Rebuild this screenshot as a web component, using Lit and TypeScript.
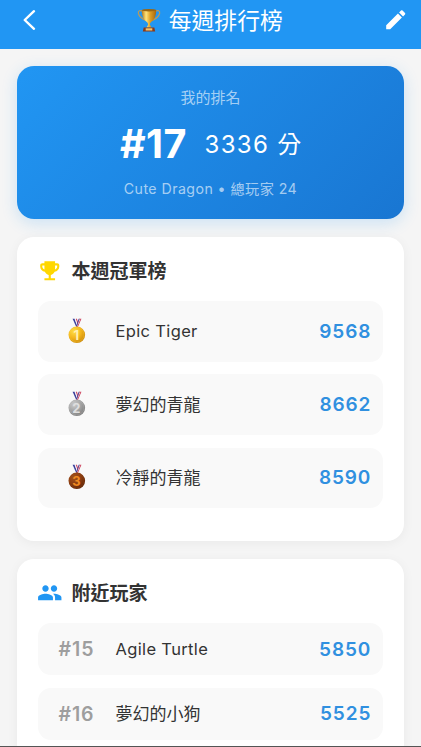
import { LitElement, html, css, svg } from "lit";
import { customElement, property } from "lit/decorators.js";

const TROPHY =
  "M19 5h-2V3H7v2H5c-1.1 0-2 .9-2 2v1c0 2.55 1.92 4.63 4.39 4.94.63 1.5 1.98 2.63 3.61 2.96V19H7v2h10v-2h-4v-3.1c1.63-.33 2.98-1.46 3.61-2.96C19.08 12.63 21 10.55 21 8V7c0-1.1-.9-2-2-2zM5 8V7h2v3.82C5.84 10.4 5 9.3 5 8zm14 0c0 1.3-.84 2.4-2 2.82V7h2v1z";
const PEOPLE =
  "M16 11c1.66 0 2.99-1.34 2.99-3S17.66 5 16 5c-1.66 0-3 1.34-3 3s1.34 3 3 3zm-8 0c1.66 0 2.99-1.34 2.99-3S9.66 5 8 5C6.34 5 5 6.34 5 8s1.34 3 3 3zm0 2c-2.33 0-7 1.17-7 3.5V19h14v-2.5c0-2.33-4.67-3.5-7-3.5zm8 0c-.29 0-.62.02-.97.05 1.16.84 1.97 1.97 1.97 3.45V19h6v-2.5c0-2.33-4.67-3.5-7-3.5z";
const PENCIL =
  "M3 17.25V21h3.75L17.81 9.94l-3.75-3.75L3 17.25zM20.71 7.04c.39-.39.39-1.02 0-1.41l-2.34-2.34c-.39-.39-1.02-.39-1.41 0l-1.83 1.83 3.75 3.75 1.83-1.83z";

const MEDALS = [
  { light: "#ffe04a", mid: "#f3b51c", dark: "#c58208", ink: "#fff0b0" },
  { light: "#cccccc", mid: "#a3a3a3", dark: "#757575", ink: "#dedede" },
  { light: "#a5521c", mid: "#8c3d10", dark: "#572005", ink: "#f08a22" },
];

@customElement("rank-medal")
class RankMedal extends LitElement {
  @property({ type: Number }) place = 1;
  static styles = css`
    :host { display: block; width: 20px; height: 27px; }
    svg { display: block; }
    text { font: 700 13px Inter, sans-serif; }
  `;
  render() {
    const m = MEDALS[this.place - 1];
    return html`<svg width="20" height="27" viewBox="0 0 20 27">
      <defs>
        <radialGradient id="g" cx=".35" cy=".3" r=".8">
          <stop offset="0" stop-color=${m.light} />
          <stop offset=".5" stop-color=${m.mid} />
          <stop offset="1" stop-color=${m.dark} />
        </radialGradient>
      </defs>
      <path d="M5.6 .8h2l3 8h-1.4z" fill="#3a3f9a" />
      <path d="M7.6 .8h1.3l2.1 6-.6 1.6z" fill="#f3eef4" />
      <path d="M8.9 .8h1l1.5 4.5-.5 1.5z" fill="#c9304c" />
      <path d="M12.2 .8h2.2l-3.4 8H9.6z" fill="#c9304c" />
      <path d="M12.7 .8h.8l-3 7.4-.4-.5z" fill="#f3eef4" />
      <path d="M11.7 .8h.8L10 8l-.4-1z" fill="#3a3f9a" />
      <circle cx="9.8" cy="16.8" r="8.3" fill="url(#g)" />
      <circle cx="9.8" cy="16.8" r="7.2" fill="none" stroke=${m.light} stroke-opacity=".35" stroke-width=".7" />
      <text x="9.8" y="21.6" text-anchor="middle" fill=${m.ink}>${this.place}</text>
    </svg>`;
  }
}

@customElement("player-row")
class PlayerRow extends LitElement {
  @property({ type: Number }) rank = 1;
  @property() name = "";
  @property({ type: Number }) score = 0;
  static styles = css`
    :host {
      display: flex;
      align-items: center;
      box-sizing: border-box;
      height: 52px;
      padding: 0 12px 0 13px;
      border-radius: 13px;
      background: #f9f9f9;
    }
    :host([podium]) { height: 60.5px; }
    .rank {
      width: 51px;
      margin-right: 13.5px;
      display: flex;
      justify-content: center;
      font-weight: 600;
      font-size: 19.5px;
      letter-spacing: 0.9px;
      color: #9e9e9e;
    }
    .name { flex: 1; font-size: 16.5px; letter-spacing: 0.35px; color: #333; }
    .name.cjk { font-size: 17px; letter-spacing: 0; padding-bottom: 2px; }
    .score { font-size: 19px; font-weight: 600; letter-spacing: 0.9px; margin-right: -0.3px; color: #3090e0; }
  `;
  render() {
    const cjk = this.name.charCodeAt(0) > 255;
    return html`
      <div class="rank">
        ${this.rank <= 3 ? html`<rank-medal .place=${this.rank}></rank-medal>` : `#${this.rank}`}
      </div>
      <div class="name ${cjk ? "cjk" : ""}">${this.name}</div>
      <div class="score">${this.score}</div>
    `;
  }
}

const icon = (d: string, cls: string) =>
  html`<svg class=${cls} viewBox="0 0 24 24">${svg`<path d=${d} fill="currentColor" />`}</svg>`;

@customElement("app-root")
class AppRoot extends LitElement {
  static styles = css`
    :host {
      display: flex;
      flex-direction: column;
      position: relative;
      box-sizing: border-box;
      height: 747px;
      overflow: hidden;
      background: #f5f5f5;
      color: #333;
      font-family: Inter, "Noto Sans CJK TC", sans-serif;
    }
    :host::after {
      content: "";
      position: absolute;
      inset: auto 0 0;
      height: 1px;
      background: #555;
    }
    header {
      flex: none;
      display: grid;
      grid-template-columns: 60px 1fr 60px;
      align-items: center;
      box-sizing: border-box;
      height: 49.3px;
      padding-bottom: 9px;
      background: #2196f3;
      color: #fff;
    }
    .back { width: 14px; height: 22px; margin-left: 22px; }
    .title { display: flex; align-items: center; justify-content: center; gap: 7.5px; margin-left: -1px; }
    .title h1 { margin: 0; padding-top: 1px; font-size: 22.8px; line-height: 30px; font-weight: 400; }
    .cup { width: 24px; height: 25px; }
    .edit { width: 25.5px; height: 25.5px; margin-left: 21.5px; }
    main { display: flex; flex-direction: column; gap: 17.5px; padding: 16.7px 17px 0; }
    .mine {
      flex: none;
      display: flex;
      flex-direction: column;
      align-items: center;
      box-sizing: border-box;
      height: 153.5px;
      padding-top: 21px;
      border-radius: 17px;
      background: linear-gradient(135deg, #2196f3, #1976d2);
      box-shadow: 0 4px 16px rgba(33, 150, 243, 0.2);
    }
    .label { font-size: 15px; line-height: 22px; color: rgba(255, 255, 255, 0.62); }
    .line { display: flex; align-items: center; gap: 17.5px; height: 50px; margin-top: 10px; color: #fff; }
    .place { font-size: 39.5px; font-weight: 700; letter-spacing: 0.5px; }
    .points { margin-top: -3px; font-size: 24px; letter-spacing: 1.3px; }
    .points span { letter-spacing: 0; }
    .meta { margin-top: 9px; font-size: 14.2px; line-height: 22px; letter-spacing: 0.43px; color: rgba(255, 255, 255, 0.62); }
    .card {
      flex: none;
      box-sizing: border-box;
      padding: 21px;
      border-radius: 17px;
      background: #fff;
      box-shadow: 0 2px 12px rgba(0, 0, 0, 0.05);
    }
    .podium { height: 304.5px; }
    .head { display: flex; align-items: center; gap: 8.7px; height: 26px; margin: 0 0 17.2px -0.7px; }
    .head h2 { margin: 0; padding-top: 2px; font-size: 19px; line-height: 26px; font-weight: 700; color: #333; }
    .ico { width: 25.5px; height: 25.5px; }
    .gold { color: #ffd700; }
    .blue { color: #2196f3; }
    .list { display: flex; flex-direction: column; gap: 12.7px; }
  `;

  render() {
    return html`
      <header>
        <svg class="back" viewBox="0 0 14 22">
          <path d="M12 2.2 2.7 11l9.3 8.8" fill="none" stroke="#fff" stroke-width="2.4" stroke-linecap="round" stroke-linejoin="round" />
        </svg>
        <div class="title">
          <svg class="cup" viewBox="0 0 24 25">
            <defs>
              <linearGradient id="c">
                <stop offset="0" stop-color="#b87a18" />
                <stop offset=".3" stop-color="#ffe37a" />
                <stop offset=".6" stop-color="#dd9d22" />
                <stop offset="1" stop-color="#a56610" />
              </linearGradient>
            </defs>
            <path d="M6 3.4C3 1.6.8 3 1.4 5.5 2.2 9 5 10.7 8.8 12.5M18 3.4c3-1.8 5.2-.4 4.6 2.1-.8 3.5-3.6 5.2-7.4 7" fill="none" stroke="#b99a5a" stroke-width="1.2" />
            <path d="M4.8 2h14.4c.1 6-1.9 9.8-5 12-1.2 1-1.3 2-1.2 3l1.5 2.5h-5L11 17c.1-1 0-2-1.2-3-3.1-2.2-5.1-6-5-12z" fill="url(#c)" />
            <ellipse cx="12" cy="2.2" rx="7.2" ry="1.2" fill="#9c6712" />
            <path d="M6.7 19.4h10.6l.9 4.2H5.8z" fill="#8a3a1c" />
            <path d="M8.7 20.3h6.6v2.2H8.7z" fill="#f4c66a" />
          </svg>
          <h1>每週排行榜</h1>
        </div>
        ${icon(PENCIL, "edit")}
      </header>
      <main>
        <section class="mine">
          <div class="label">我的排名</div>
          <div class="line">
            <div class="place">#17</div>
            <div class="points">3336 <span>分</span></div>
          </div>
          <div class="meta">Cute Dragon • 總玩家 24</div>
        </section>
        <section class="card podium">
          <div class="head">${icon(TROPHY, "ico gold")}<h2>本週冠軍榜</h2></div>
          <div class="list">
            <player-row podium .rank=${1} .name=${"Epic Tiger"} .score=${9568}></player-row>
            <player-row podium .rank=${2} .name=${"夢幻的青龍"} .score=${8662}></player-row>
            <player-row podium .rank=${3} .name=${"冷靜的青龍"} .score=${8590}></player-row>
          </div>
        </section>
        <section class="card">
          <div class="head">${icon(PEOPLE, "ico blue")}<h2>附近玩家</h2></div>
          <div class="list">
            <player-row .rank=${15} .name=${"Agile Turtle"} .score=${5850}></player-row>
            <player-row .rank=${16} .name=${"夢幻的小狗"} .score=${5525}></player-row>
          </div>
        </section>
      </main>
    `;
  }
}
